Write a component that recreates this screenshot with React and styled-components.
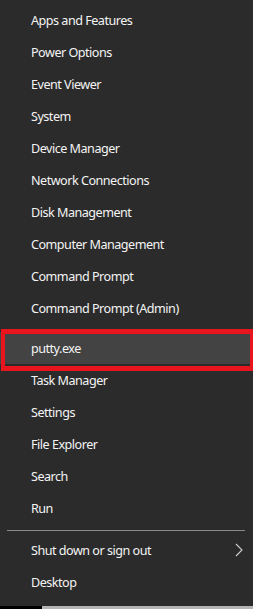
import styled, { createGlobalStyle } from "styled-components";

const Global = createGlobalStyle`
	html, body {
		margin: 0;
		padding: 0;
		background: #2b2b2b;
	}
	* { box-sizing: border-box; }
`;

const top_items = [
	"Apps and Features",
	"Power Options",
	"Event Viewer",
	"System",
	"Device Manager",
	"Network Connections",
	"Disk Management",
	"Computer Management",
	"Command Prompt",
	"Command Prompt (Admin)",
];

const middle_items = ["Task Manager", "Settings", "File Explorer", "Search", "Run"];

const Menu = styled.div`
	width: 253px;
	height: 609px;
	background: #2b2b2b;
	padding-top: 4px;
	display: flex;
	flex-direction: column;
	overflow: hidden;
	font-family: "Noto Sans", "Open Sans", sans-serif;
`;

const Item = styled.div`
	height: 32px;
	flex-shrink: 0;
	display: flex;
	align-items: center;
	justify-content: space-between;
	padding: 0 9px 0 31px;
	color: #f4f4f4;
	font-size: 12.6px;
	letter-spacing: -0.5px;
	position: relative;
	background: ${(props) => (props.$selected ? "#434343" : "transparent")};
	margin-top: ${(props) => props.$gap || 0}px;
`;

/* red annotation frame drawn over the selected row */
const Frame = styled.div`
	position: absolute;
	top: -3px;
	bottom: -7px;
	left: 1px;
	right: -2px;
	border: 5px solid #e8141e;
	border-left-width: 4px;
	pointer-events: none;
`;

const Divider = styled.div`
	height: 1px;
	flex-shrink: 0;
	margin: 6px 8px 3px 7px;
	background: #8a8a8a;
`;

const Chevron = styled.svg`
	width: 8px;
	height: 14px;
	display: block;
	margin-right: 1px;
`;

const Spacer = styled.div`
	flex: 1;
`;

const Taskbar = styled.div`
	height: 3px;
	flex-shrink: 0;
	display: flex;
`;

const TaskbarPart = styled.div`
	height: 100%;
	width: ${(props) => props.$w || "auto"};
	flex: ${(props) => (props.$w ? "none" : 1)};
	background: ${(props) => props.$color};
`;

export default function App() {
	return (
		<>
			<Global />
			<Menu>
				{top_items.map((label) => (
					<Item key={label}>{label}</Item>
				))}
				<Item $selected $gap={8}>
					putty.exe
					<Frame />
				</Item>
				{middle_items.map((label) => (
					<Item key={label}>{label}</Item>
				))}
				<Divider />
				<Item>
					Shut down or sign out
					<Chevron viewBox="0 0 8 14">
						<path d="M1 1 L7 7 L1 13" fill="none" stroke="#d0d0d0" strokeWidth="1.1" />
					</Chevron>
				</Item>
				<Item>Desktop</Item>
				<Spacer />
				<Taskbar>
					<TaskbarPart $w="42px" $color="#000" />
					<TaskbarPart $color="#b4b4b4" />
				</Taskbar>
			</Menu>
		</>
	);
}
